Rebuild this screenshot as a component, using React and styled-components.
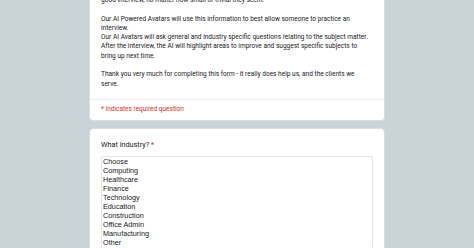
import React from 'react';
import styled, { createGlobalStyle } from 'styled-components';

const Global = createGlobalStyle`
  html, body {
    margin: 0;
    padding: 0;
    background: #c9d3d8;
    overflow: hidden;
  }
  body {
    font-family: Roboto, "Liberation Sans", Arial, sans-serif;
    color: #202124;
  }
`;

const Page = styled.div`
  width: 296px;
  margin: -5px auto 0;
  display: flex;
  flex-direction: column;
  gap: 6.5px;
`;

const Card = styled.div`
  background: #fff;
  border: 1px solid #dadce0;
  border-radius: 4px;
  box-sizing: border-box;
  overflow: hidden;
`;

const Description = styled.div`
  padding: 0 11px 10px;
  font-size: 6.55px;
  line-height: 9.3px;
  white-space: pre-wrap;
`;

const Divider = styled.div`
  height: 1px;
  background: #eceef0;
`;

const Required = styled.div`
  padding: 5.5px 11px 6px;
  font-size: 6.5px;
  line-height: 9px;
  color: #d93025;
`;

const QuestionBody = styled.div`
  padding: 11px 11px 12px;
  display: flex;
  flex-direction: column;
  gap: 6.5px;
`;

const Question = styled.div`
  font-size: 7.3px;
  line-height: 10px;
  color: #202124;
`;

const Star = styled.span`
  color: #d93025;
`;

const ListBox = styled.select`
  appearance: none;
  width: 100%;
  height: 93px;
  margin: 0;
  padding: 0;
  border: 1px solid #e6e6e6;
  border-radius: 2px;
  background: #fff;
  font-family: "Liberation Sans", Arial, sans-serif;
  font-size: 7.25px;
  color: #202124;
  overflow: hidden;
  outline: none;

  option {
    padding: 0 1px;
    color: #202124;
  }
`;

const intro = `good interview, no matter how small or trivial they seem.

Our AI Powered Avatars will use this information to best allow someone to practice an interview.
Our AI Avatars will ask general and industry specific questions relating to the subject matter.
After the interview, the AI will highlight areas to improve and suggest specific subjects to bring up next time.

Thank you very much for completing this form - it really does help us, and the clients we serve.`;

const industries = [
  'Choose',
  'Computing',
  'Healthcare',
  'Finance',
  'Technology',
  'Education',
  'Construction',
  'Office Admin',
  'Manufacturing',
  'Other',
];

export default function App() {
  return (
    <>
      <Global />
      <Page>
        <Card>
          <Description>{intro}</Description>
          <Divider />
          <Required>* Indicates required question</Required>
        </Card>
        <Card>
          <QuestionBody>
            <Question>
              What industry? <Star>*</Star>
            </Question>
            <ListBox size={10}>
              {industries.map((name) => (
                <option key={name} value={name === 'Choose' ? '' : name}>
                  {name}
                </option>
              ))}
            </ListBox>
          </QuestionBody>
        </Card>
      </Page>
    </>
  );
}
